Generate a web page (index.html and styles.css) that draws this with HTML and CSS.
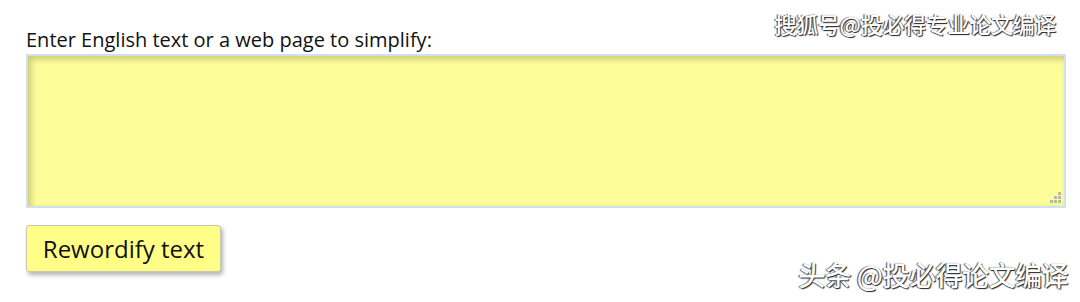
FILE: index.html
```html
<!DOCTYPE html>
<html lang="en">
<head>
    <meta charset="UTF-8">
    <title>Rewordify</title>
    <link rel="stylesheet" href="styles.css">
</head>
<body>
    <div class="page">
        <div class="mark-top">搜狐号@投必得专业论文编译</div>
        <label class="prompt" for="source">Enter English text or a web page to simplify:</label>
        <div class="box-wrap">
            <textarea id="source" class="source-box"></textarea>
        </div>
        <div class="actions">
            <button type="button" class="reword-btn">Rewordify text</button>
        </div>
        <div class="mark-bottom">头条 @投必得论文编译</div>
    </div>
</body>
</html>
```

FILE: styles.css
```css
* {
    margin: 0;
    padding: 0;
    box-sizing: border-box;
}

body {
    background: #fff;
    font-family: 'Open Sans', 'Liberation Sans', sans-serif;
    color: #111;
}

.page {
    position: relative;
    width: 1080px;
    height: 302px;
    padding: 26px 14px 0 26px;
}

.prompt {
    display: block;
    font-size: 20px;
    line-height: 28px;
}

.box-wrap {
    position: relative;
    width: 1040px;
}

.source-box {
    display: block;
    width: 1040px;
    height: 154px;
    background: #fdfd9a;
    border: 2px solid #cfe0ef;
    box-shadow: inset 3px 3px 6px rgba(130, 120, 60, 0.4);
    resize: none;
    font-family: inherit;
    font-size: 18px;
    outline: none;
}

/* dotted resize grip */
.box-wrap::after {
    content: '';
    position: absolute;
    right: 5px;
    bottom: 5px;
    width: 11px;
    height: 11px;
    background:
        linear-gradient(#b8b8a8, #b8b8a8) 8px 0 / 3px 3px no-repeat,
        linear-gradient(#b8b8a8, #b8b8a8) 4px 4px / 3px 3px no-repeat,
        linear-gradient(#b8b8a8, #b8b8a8) 8px 4px / 3px 3px no-repeat,
        linear-gradient(#b8b8a8, #b8b8a8) 0 8px / 3px 3px no-repeat,
        linear-gradient(#b8b8a8, #b8b8a8) 4px 8px / 3px 3px no-repeat,
        linear-gradient(#b8b8a8, #b8b8a8) 8px 8px / 3px 3px no-repeat;
}

.actions {
    padding-top: 17px;
}

.reword-btn {
    height: 47px;
    width: 195px;
    font-family: inherit;
    font-size: 24px;
    color: #111;
    background: #ffff88;
    border: 1px solid #c8c8b0;
    border-radius: 3px;
    box-shadow: 2px 3px 4px rgba(0, 0, 0, 0.3);
    cursor: pointer;
}

.mark-top,
.mark-bottom {
    position: absolute;
    color: #fff;
    font-family: 'Noto Sans CJK SC', sans-serif;
    font-weight: 500;
    text-shadow: 1px 1px 1px #222, -1px 0 1px #444;
    white-space: nowrap;
}

.mark-top {
    top: 7px;
    right: 24px;
    font-size: 22px;
    letter-spacing: -0.3px;
}

.mark-bottom {
    top: 255px;
    right: 12px;
    font-size: 27px;
    letter-spacing: -0.5px;
}
```
